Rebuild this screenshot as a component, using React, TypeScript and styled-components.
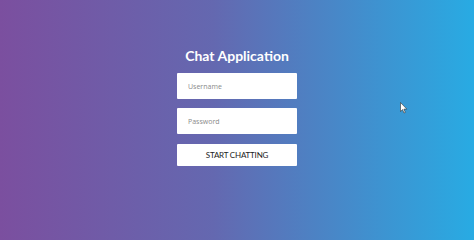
import React from "react";
import styled, { createGlobalStyle } from "styled-components";

const GlobalStyle = createGlobalStyle`
  html, body, #root {
    margin: 0;
    padding: 0;
    height: 100%;
  }
  body {
    font-family: Lato, "Open Sans", sans-serif;
  }
`;

const App = () => {
  return (
    <>
      <GlobalStyle />
      <Page>
        <Form>
          <Title>Chat Application</Title>
          <Input placeholder="Username" />
          <Input type="password" placeholder="Password" />
          <Button type="button">START CHATTING</Button>
        </Form>
        <Cursor viewBox="0 0 8 12" aria-hidden>
          <path
            d="M0.5 0.5 L0.5 9.5 L2.6 7.6 L4 11 L5.3 10.4 L3.9 7.1 L6.8 7.1 Z"
            fill="#fff"
            stroke="#333"
            strokeWidth="0.6"
          />
        </Cursor>
      </Page>
    </>
  );
};

export default App;

const Page = styled.div`
  position: relative;
  width: 100%;
  height: 100vh;
  display: flex;
  justify-content: center;
  background: linear-gradient(to right, #7b4f9f 0%, #6468b0 45%, #28abe3 100%);
  overflow: hidden;
`;

const Form = styled.div`
  display: flex;
  flex-direction: column;
  align-items: center;
  padding-top: 45px;
  width: 120px;
`;

const Title = styled.h1`
  margin: 0 0 7px;
  color: #fff;
  font-family: Lato, sans-serif;
  font-size: 14px;
  font-weight: 700;
  line-height: 21px;
  white-space: nowrap;
`;

const Input = styled.input`
  box-sizing: border-box;
  width: 120px;
  height: 26px;
  margin-bottom: 9px;
  padding: 0 11px;
  border: none;
  border-radius: 1px;
  background: #fff;
  font-family: "Open Sans", sans-serif;
  font-size: 7px;
  outline: none;

  &::placeholder {
    color: #8a8a8a;
  }
`;

const Button = styled.button`
  box-sizing: border-box;
  width: 120px;
  height: 22px;
  margin-top: 1px;
  border: none;
  border-radius: 1px;
  background: #fff;
  color: #222;
  font-family: Lato, sans-serif;
  font-size: 8px;
  letter-spacing: -0.2px;
  cursor: pointer;
`;

const Cursor = styled.svg`
  position: absolute;
  left: 400px;
  top: 102px;
  width: 8px;
  height: 12px;
`;
